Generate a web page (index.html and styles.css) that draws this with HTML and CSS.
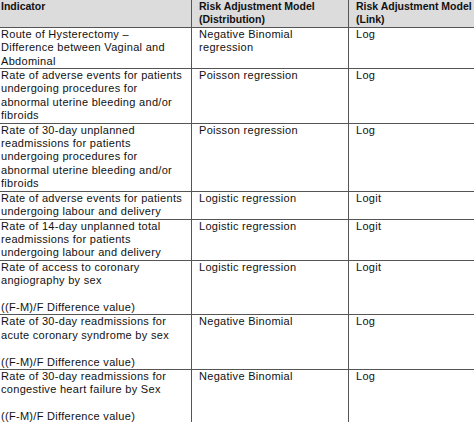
FILE: index.html
```html
<!DOCTYPE html>
<html>
<head>
<meta charset="utf-8">
<link rel="stylesheet" href="styles.css">
</head>
<body>
<table class="grid">
  <colgroup>
    <col class="c1"><col class="c2"><col class="c3">
  </colgroup>
  <thead>
    <tr>
      <th>Indicator</th>
      <th>Risk Adjustment Model (Distribution)</th>
      <th>Risk Adjustment Model (Link)</th>
    </tr>
  </thead>
  <tbody>
    <tr>
      <td>Route of Hysterectomy –<br>Difference between Vaginal and<br>Abdominal</td>
      <td>Negative Binomial<br>regression</td>
      <td>Log</td>
    </tr>
    <tr>
      <td>Rate of adverse events for patients<br>undergoing procedures for<br>abnormal uterine bleeding and/or<br>fibroids</td>
      <td>Poisson regression</td>
      <td>Log</td>
    </tr>
    <tr>
      <td>Rate of 30-day unplanned<br>readmissions for patients<br>undergoing procedures for<br>abnormal uterine bleeding and/or<br>fibroids</td>
      <td>Poisson regression</td>
      <td>Log</td>
    </tr>
    <tr>
      <td>Rate of adverse events for patients<br>undergoing labour and delivery</td>
      <td>Logistic regression</td>
      <td>Logit</td>
    </tr>
    <tr>
      <td>Rate of 14-day unplanned total<br>readmissions for patients<br>undergoing labour and delivery</td>
      <td>Logistic regression</td>
      <td>Logit</td>
    </tr>
    <tr>
      <td>Rate of access to coronary<br>angiography by sex<br><br>((F-M)/F Difference value)</td>
      <td>Logistic regression</td>
      <td>Logit</td>
    </tr>
    <tr>
      <td>Rate of 30-day readmissions for<br>acute coronary syndrome by sex<br><br>((F-M)/F Difference value)</td>
      <td>Negative Binomial</td>
      <td>Log</td>
    </tr>
    <tr>
      <td>Rate of 30-day readmissions for<br>congestive heart failure by Sex<br><br>((F-M)/F Difference value)</td>
      <td>Negative Binomial</td>
      <td>Log</td>
    </tr>
  </tbody>
</table>
</body>
</html>
```
FILE: styles.css
```css
html, body {
  margin: 0;
  padding: 0;
  background: #ffffff;
  overflow: hidden;
  width: 474px;
  height: 422px;
}

.grid {
  border-collapse: collapse;
  table-layout: fixed;
  width: 500px;
  margin-left: -7px;
  font-family: "Liberation Sans", Arial, sans-serif;
  font-size: 11px;
  line-height: 13.4px;
  letter-spacing: 0.3px;
  color: #111;
}

.c1 { width: 198px; }
.c2 { width: 157px; }
.c3 { width: 145px; }

.grid th,
.grid td {
  text-align: left;
  vertical-align: top;
  padding: 0 6px 0 7px;
  border: 1px solid #555;
  white-space: nowrap;
}

.grid th {
  background: #dcdcdc;
  font-weight: bold;
  font-size: 10.5px;
  letter-spacing: 0;
  white-space: normal;
  border-top: none;
}

.grid td:nth-child(2),
.grid th:nth-child(2) {
  border-left-color: #333;
}
```
